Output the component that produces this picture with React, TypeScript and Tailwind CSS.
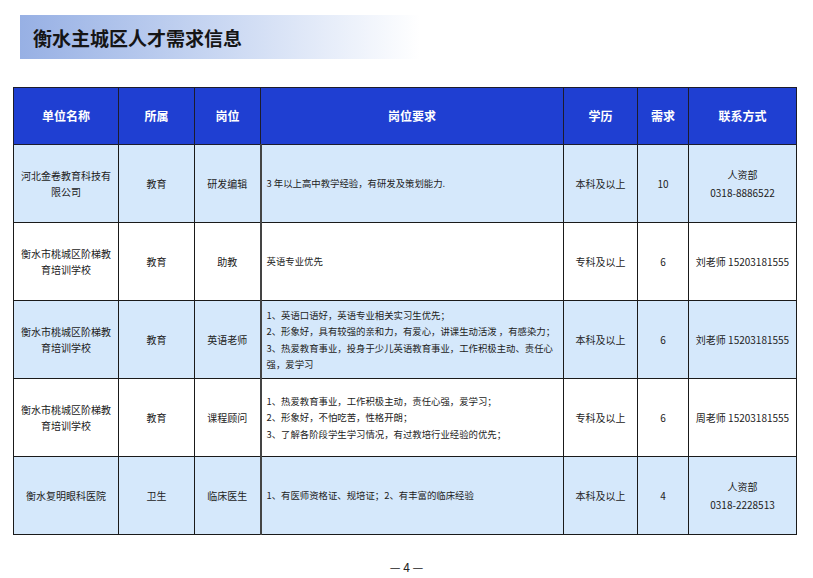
import React from "react";

const font = { fontFamily: '"Noto Sans CJK SC", "Noto Sans", sans-serif' };

type Row = {
  org: string[];
  cat: string;
  pos: string;
  req: string[];
  edu: string;
  num: string;
  contact: string[];
  blue: boolean;
};

const rows: Row[] = [
  {
    org: ["河北金卷教育科技有", "限公司"],
    cat: "教育",
    pos: "研发编辑",
    req: ["3 年以上高中教学经验，有研发及策划能力."],
    edu: "本科及以上",
    num: "10",
    contact: ["人资部", "0318-8886522"],
    blue: true,
  },
  {
    org: ["衡水市桃城区阶梯教", "育培训学校"],
    cat: "教育",
    pos: "助教",
    req: ["英语专业优先"],
    edu: "专科及以上",
    num: "6",
    contact: ["刘老师 15203181555"],
    blue: false,
  },
  {
    org: ["衡水市桃城区阶梯教", "育培训学校"],
    cat: "教育",
    pos: "英语老师",
    req: [
      "1、英语口语好，英语专业相关实习生优先；",
      "2、形象好，具有较强的亲和力，有爱心，讲课生动活泼 ，有感染力；",
      "3、热爱教育事业，投身于少儿英语教育事业，工作积极主动、责任心",
      "强，爱学习",
    ],
    edu: "本科及以上",
    num: "6",
    contact: ["刘老师 15203181555"],
    blue: true,
  },
  {
    org: ["衡水市桃城区阶梯教", "育培训学校"],
    cat: "教育",
    pos: "课程顾问",
    req: [
      "1、热爱教育事业，工作积极主动，责任心强，爱学习；",
      "2、形象好，不怕吃苦，性格开朗；",
      "3、了解各阶段学生学习情况，有过教培行业经验的优先；",
    ],
    edu: "专科及以上",
    num: "6",
    contact: ["周老师 15203181555"],
    blue: false,
  },
  {
    org: ["衡水复明眼科医院"],
    cat: "卫生",
    pos: "临床医生",
    req: ["1、有医师资格证、规培证；2、有丰富的临床经验"],
    edu: "本科及以上",
    num: "4",
    contact: ["人资部", "0318-2228513"],
    blue: true,
  },
];

const headers = ["单位名称", "所属", "岗位", "岗位要求", "学历", "需求", "联系方式"];
const widths = ["w-[105px]", "w-[76px]", "w-[66px]", "w-[303px]", "w-[74px]", "w-[51px]", "w-[108px]"];

export default function App() {
  return (
    <div className="relative w-[813px] h-[578px] bg-white overflow-hidden" style={font}>
      <div className="pt-[15px] pl-[20px]">
        <div className="w-[400px] h-[44px] bg-gradient-to-r from-[#97b0e4] via-[#c9d7f2] to-white flex items-center pl-[13px]">
          <span className="text-[19px] font-bold text-[#151515] leading-none">
            衡水主城区人才需求信息
          </span>
        </div>
      </div>

      <div className="pl-[13px] pt-[28px]">
        <table className="border-collapse table-fixed w-[784px] text-[10px] text-[#222]">
          <colgroup>
            {widths.map((w, i) => (
              <col key={i} className={w} />
            ))}
          </colgroup>
          <thead>
            <tr className="h-[57px] bg-[#1f3fd2]">
              {headers.map((h, i) => (
                <th
                  key={i}
                  className="border border-[#1c1c2c] text-white text-[12px] font-bold text-center align-middle p-0"
                >
                  {h}
                </th>
              ))}
            </tr>
          </thead>
          <tbody>
            {rows.map((r, i) => (
              <tr key={i} className={`h-[78px] ${r.blue ? "bg-[#d5e8fb]" : "bg-white"}`}>
                <td className="border border-[#1a1a1a] text-center align-middle px-[4px] leading-[16px]">
                  {r.org.map((l, j) => (
                    <div key={j}>{l}</div>
                  ))}
                </td>
                <td className="border border-[#1a1a1a] text-center align-middle">{r.cat}</td>
                <td className="border border-[#1a1a1a] text-center align-middle">{r.pos}</td>
                <td className="border border-[#1a1a1a] border-l-2 border-l-[#444] align-middle pl-[5px] pr-[2px] leading-[16.5px] whitespace-nowrap text-[9.4px]">
                  {r.req.map((l, j) => (
                    <div key={j}>{l}</div>
                  ))}
                </td>
                <td className="border border-[#1a1a1a] text-center align-middle">{r.edu}</td>
                <td className="border border-[#1a1a1a] text-center align-middle">{r.num}</td>
                <td className="border border-[#1a1a1a] text-center align-middle leading-[18px] whitespace-nowrap">
                  {r.contact.map((l, j) => (
                    <div key={j}>{l}</div>
                  ))}
                </td>
              </tr>
            ))}
          </tbody>
        </table>
      </div>

      <div className="absolute left-0 right-0 top-[561px] text-center text-[12px] text-[#222] leading-none">
        — 4 —
      </div>
    </div>
  );
}
